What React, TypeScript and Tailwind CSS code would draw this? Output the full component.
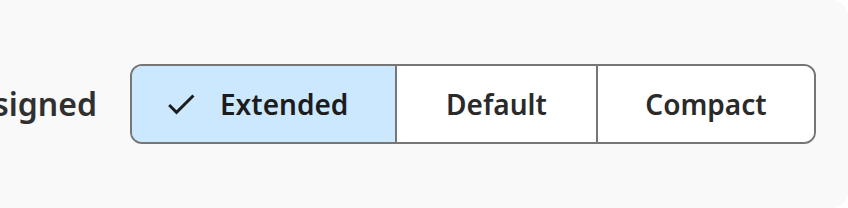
import React from "react";

export default function App() {
  return (
    <div className="w-[848px] h-[208px] bg-white overflow-hidden" style={{ fontFamily: '"Noto Sans", "Open Sans", sans-serif' }}>
      <div className="w-full h-full bg-[#f9f9f9] rounded-r-[16px] flex items-center justify-end pr-[32px] gap-[33px] overflow-hidden">
        <span className="shrink-0 whitespace-nowrap text-[32px] font-semibold text-[#303030] leading-none">Assigned</span>
        <div className="shrink-0 flex h-[80px] border-2 border-[#767676] rounded-[12px] overflow-hidden">
          <button className="w-[263px] h-full flex items-center pl-[31px] gap-[21px] bg-[#cce8ff] text-[#1c1c1c]">
            <svg width="36" height="36" viewBox="0 0 24 24" fill="currentColor">
              <path d="M9 16.17L4.83 12l-1.42 1.41L9 19 21 7l-1.41-1.41z" />
            </svg>
            <span className="text-[28px] font-semibold leading-none">Extended</span>
          </button>
          <button className="w-[201px] h-full flex items-center justify-center border-l-2 border-[#767676] bg-white text-[#2a2a2a]">
            <span className="text-[28px] font-semibold leading-none">Default</span>
          </button>
          <button className="w-[218px] h-full flex items-center justify-center border-l-2 border-[#767676] bg-white text-[#2a2a2a]">
            <span className="text-[28px] font-semibold leading-none">Compact</span>
          </button>
        </div>
      </div>
    </div>
  );
}
